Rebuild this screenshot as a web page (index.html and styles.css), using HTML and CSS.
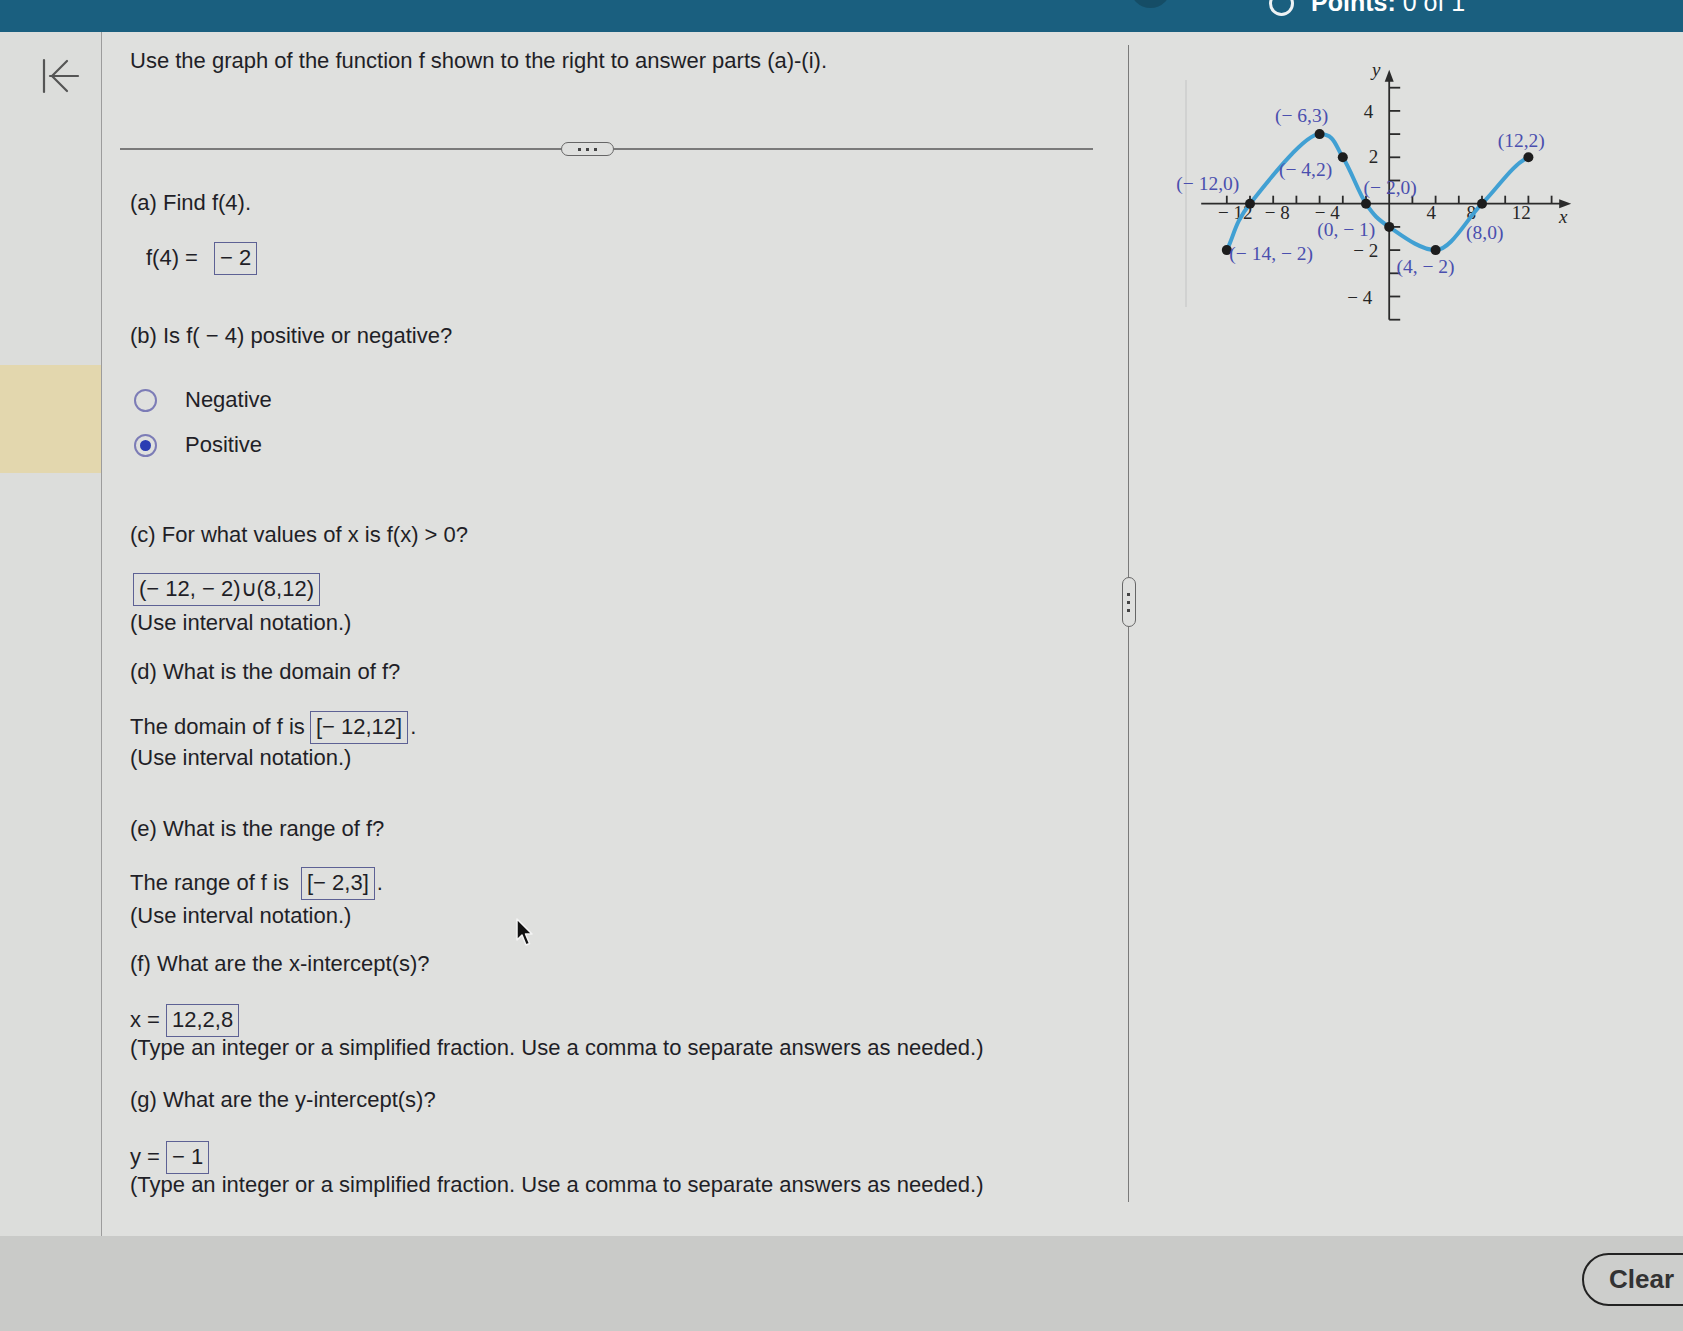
FILE: index.html
```html
<!DOCTYPE html>
<html lang="en">
<head>
<meta charset="utf-8">
<title>Function graph question</title>
<link rel="stylesheet" href="styles.css">
</head>
<body>
<header class="topbar">
  <div class="avatar"></div>
  <div class="status-ring"></div>
  <div class="points"><b>Points:</b> 0 of 1</div>
</header>

<div class="workspace">
  <aside class="sidebar">
    <svg class="back-icon" width="40" height="36" viewBox="0 0 40 36">
      <line x1="4" y1="2" x2="4" y2="34"/>
      <line x1="10" y1="18" x2="38" y2="18"/>
      <polyline points="27,3 12,18 27,33"/>
    </svg>
    <div class="highlight"></div>
  </aside>

  <main class="question">
    <p class="line title">Use the graph of the function f shown to the right to answer parts (a)-(i).</p>

    <div class="hdivider"><span class="hline-left"></span><span class="pill-h"><i></i><i></i><i></i></span><span class="hline-right"></span></div>

    <p class="line mt-32">(a) Find f(4).</p>
    <div class="line mt-25 indent">f(4) =<span class="answer ml-16">− 2</span></div>

    <p class="line mt-48">(b) Is f( − 4) positive or negative?</p>
    <div class="line option mt-34"><span class="radio"></span>Negative</div>
    <div class="line option mt-15"><span class="radio checked"></span>Positive</div>

    <p class="line mt-60">(c) For what values of x is f(x) &gt; 0?</p>
    <div class="line mt-24 nudge"><span class="answer">(− 12, − 2)∪(8,12)</span></div>
    <p class="note mt-6">(Use interval notation.)</p>

    <p class="line mt-21">(d) What is the domain of f?</p>
    <div class="line mt-25">The domain of f is<span class="answer ml-5">[− 12,12]</span><span class="ml-2">.</span></div>
    <p class="note mt-3">(Use interval notation.)</p>

    <p class="line mt-43">(e) What is the range of f?</p>
    <div class="line mt-24">The range of f is<span class="answer ml-12">[− 2,3]</span><span class="ml-2">.</span></div>
    <p class="note mt-5">(Use interval notation.)</p>

    <p class="line mt-20">(f) What are the x-intercept(s)?</p>
    <div class="line mt-26">x =<span class="answer ml-6">12,2,8</span></div>
    <p class="note">(Type an integer or a simplified fraction. Use a comma to separate answers as needed.)</p>

    <p class="line mt-24">(g) What are the y-intercept(s)?</p>
    <div class="line mt-27">y =<span class="answer ml-6">− 1</span></div>
    <p class="note">(Type an integer or a simplified fraction. Use a comma to separate answers as needed.)</p>
  </main>

  <div class="vdivider"><span class="vline-top"></span><span class="pill-v"><i></i><i></i><i></i></span><span class="vline-bottom"></span></div>

  <section class="graph-pane">
    <svg class="graph" width="420" height="290" viewBox="0 0 420 290">
      <line class="frame" x1="27" y1="30" x2="27" y2="257"/>
      <g transform="translate(230.2,153.7)">
        <g class="axis">
          <line x1="-188" y1="0" x2="174" y2="0"/>
          <line x1="0" y1="116" x2="0" y2="-126"/>
          <line x1="-162.4" y1="0" x2="-162.4" y2="-8"/>
          <line x1="-139.2" y1="0" x2="-139.2" y2="-8"/>
          <line x1="-116" y1="0" x2="-116" y2="-8"/>
          <line x1="-92.8" y1="0" x2="-92.8" y2="-8"/>
          <line x1="-69.6" y1="0" x2="-69.6" y2="-8"/>
          <line x1="-46.4" y1="0" x2="-46.4" y2="-8"/>
          <line x1="-23.2" y1="0" x2="-23.2" y2="-8"/>
          <line x1="23.2" y1="0" x2="23.2" y2="-8"/>
          <line x1="46.4" y1="0" x2="46.4" y2="-8"/>
          <line x1="69.6" y1="0" x2="69.6" y2="-8"/>
          <line x1="92.8" y1="0" x2="92.8" y2="-8"/>
          <line x1="116" y1="0" x2="116" y2="-8"/>
          <line x1="139.2" y1="0" x2="139.2" y2="-8"/>
          <line x1="162.4" y1="0" x2="162.4" y2="-8"/>
          <line x1="0" y1="-116" x2="11" y2="-116"/>
          <line x1="0" y1="-92.8" x2="11" y2="-92.8"/>
          <line x1="0" y1="-69.6" x2="11" y2="-69.6"/>
          <line x1="0" y1="-46.4" x2="11" y2="-46.4"/>
          <line x1="0" y1="-23.2" x2="11" y2="-23.2"/>
          <line x1="0" y1="23.2" x2="11" y2="23.2"/>
          <line x1="0" y1="46.4" x2="11" y2="46.4"/>
          <line x1="0" y1="69.6" x2="11" y2="69.6"/>
          <line x1="0" y1="92.8" x2="11" y2="92.8"/>
          <line x1="0" y1="116" x2="11" y2="116"/>
        </g>
        <polygon class="arrow" points="182,0 170,-4.5 170,4.5"/>
        <polygon class="arrow" points="0,-134 -4.5,-122 4.5,-122"/>

        <g class="num">
          <text x="-16" y="-86" text-anchor="end">4</text>
          <text x="-11" y="-41" text-anchor="end">2</text>
          <text x="-11" y="53" text-anchor="end">− 2</text>
          <text x="-17" y="100" text-anchor="end">− 4</text>
          <text class="var" x="-13" y="-128" text-anchor="middle">y</text>
          <text x="-154" y="15" text-anchor="middle">− 12</text>
          <text x="-112" y="15" text-anchor="middle">− 8</text>
          <text x="-62" y="15" text-anchor="middle">− 4</text>
          <text x="42" y="15" text-anchor="middle">4</text>
          <text x="82" y="15" text-anchor="middle">8</text>
          <text x="132" y="15" text-anchor="middle">12</text>
          <text class="var" x="174" y="19" text-anchor="middle">x</text>
        </g>

        <path class="curve" d="M-162.4,46.4 C-154.7,30.9 -154.7,19.3 -139.2,0 C-123.7,-19.3 -85.1,-69.6 -69.6,-69.6 C-54.1,-69.6 -54.1,-58 -46.4,-46.4 C-38.7,-34.8 -30.9,-11.6 -23.2,0 C-15.5,11.6 -11.6,15.5 0,23.2 C11.6,30.9 30.9,46.4 46.4,46.4 C61.9,46.4 77.3,15.5 92.8,0 C108.3,-15.5 123.7,-39.7 139.2,-46.4"/>

        <g class="dots">
          <circle cx="-162.4" cy="46.4" r="5"/>
          <circle cx="-139.2" cy="0" r="5"/>
          <circle cx="-69.6" cy="-69.6" r="5"/>
          <circle cx="-46.4" cy="-46.4" r="5"/>
          <circle cx="-23.2" cy="0" r="5"/>
          <circle cx="0" cy="23.2" r="5"/>
          <circle cx="46.4" cy="46.4" r="5"/>
          <circle cx="92.8" cy="0" r="5"/>
          <circle cx="139.2" cy="-46.4" r="5"/>
        </g>

        <g class="pt" text-anchor="middle">
          <text x="-87.7" y="-82">(− 6,3)</text>
          <text x="-83.7" y="-28">(− 4,2)</text>
          <text x="-181.4" y="-14">(− 12,0)</text>
          <text x="1" y="-10">(− 2,0)</text>
          <text x="-43" y="32">(0, − 1)</text>
          <text x="-118" y="56">(− 14, − 2)</text>
          <text x="36.3" y="69">(4, − 2)</text>
          <text x="95.6" y="35">(8,0)</text>
          <text x="132" y="-57">(12,2)</text>
        </g>
      </g>
    </svg>
  </section>
</div>

<footer class="footer">
  <button class="clear-btn" type="button">Clear</button>
</footer>

<svg class="cursor" width="22" height="32" viewBox="0 0 22 32">
  <path d="M3 2 L3 23 L8 18 L12 28 L15.5 26.5 L11.5 17 L18 17 Z"/>
</svg>
</body>
</html>
```

FILE: styles.css
```css
html, body {
  margin: 0;
  padding: 0;
}

body {
  width: 1683px;
  height: 1331px;
  overflow: hidden;
  position: relative;
  background: #dfe0de;
  font-family: "Liberation Sans", Arial, sans-serif;
  color: #1f1f27;
}

/* top bar */
.topbar {
  height: 32px;
  background: #1a5f7f;
  display: flex;
  align-items: flex-start;
  padding-left: 1130px;
  overflow: hidden;
}

.avatar {
  width: 41px;
  height: 41px;
  border-radius: 50%;
  background: #154d66;
  margin-top: -33px;
  flex-shrink: 0;
}

.status-ring {
  width: 19px;
  height: 19px;
  border: 3px solid #eef2f4;
  border-radius: 50%;
  margin: -9px 0 0 98px;
  flex-shrink: 0;
}

.points {
  color: #ffffff;
  font-size: 25px;
  line-height: 25px;
  margin: -10px 0 0 17px;
  white-space: nowrap;
}

/* workspace */
.workspace {
  display: flex;
  height: 1204px;
}

.sidebar {
  width: 101px;
  flex-shrink: 0;
  background: #dcdddb;
  border-right: 1px solid #9c9c9c;
}

.back-icon {
  display: block;
  margin: 26px 0 0 40px;
  fill: none;
  stroke: #555;
  stroke-width: 2.2;
  stroke-linecap: round;
  stroke-linejoin: round;
}

.highlight {
  margin-top: 271px;
  height: 108px;
  background: #e3d7ae;
}

.question {
  width: 1019px;
  flex-shrink: 0;
  box-sizing: border-box;
  padding: 14px 28px 0 28px;
}

.line {
  margin: 0;
  height: 30px;
  line-height: 30px;
  font-size: 22px;
  white-space: nowrap;
  display: flex;
  align-items: center;
}

.note {
  margin: 0;
  height: 26px;
  line-height: 26px;
  font-size: 22px;
  white-space: nowrap;
}

.indent { padding-left: 16px; }
.nudge { padding-left: 3px; }

.answer {
  display: inline-block;
  height: 33px;
  line-height: 30px;
  box-sizing: border-box;
  border: 1.5px solid #5d6194;
  padding: 0 5px;
}

.option { padding-left: 4px; }

.radio {
  width: 23px;
  height: 23px;
  box-sizing: border-box;
  border: 2px solid #7c7cb6;
  border-radius: 50%;
  margin-right: 28px;
  display: flex;
  align-items: center;
  justify-content: center;
  flex-shrink: 0;
}

.radio.checked::after {
  content: "";
  width: 11px;
  height: 11px;
  border-radius: 50%;
  background: #2b3db3;
}

/* horizontal divider */
.hdivider {
  margin: 66px 0 0 -10px;
  width: 973px;
  height: 14px;
  display: flex;
  align-items: center;
}

.hline-left {
  width: 441px;
  height: 1.5px;
  background: #7a7a7a;
}

.hline-right {
  flex: 1;
  height: 1.5px;
  background: #7a7a7a;
}

.pill-h {
  width: 51px;
  height: 12px;
  border: 1.5px solid #666;
  border-radius: 8px;
  display: flex;
  align-items: center;
  justify-content: center;
  gap: 5px;
}

.pill-h i, .pill-v i {
  display: block;
  width: 3px;
  height: 3px;
  background: #444;
}

/* vertical divider */
.vdivider {
  width: 15px;
  flex-shrink: 0;
  box-sizing: border-box;
  padding: 13px 0 34px;
  display: flex;
  flex-direction: column;
  align-items: center;
}

.vline-top {
  width: 1.5px;
  height: 532px;
  background: #7a7a7a;
}

.vline-bottom {
  width: 1.5px;
  flex: 1;
  background: #7a7a7a;
}

.pill-v {
  width: 12px;
  height: 48px;
  border: 1.5px solid #666;
  border-radius: 8px;
  display: flex;
  flex-direction: column;
  align-items: center;
  justify-content: center;
  gap: 5px;
}

/* graph */
.graph-pane {
  flex: 1;
  padding: 18px 0 0 23px;
}

.graph {
  display: block;
  font-family: "Liberation Serif", "Times New Roman", serif;
}

.graph .frame {
  stroke: #cdcecc;
  stroke-width: 1.5;
}

.graph .axis line {
  stroke: #2b2b2b;
  stroke-width: 1.8;
}

.graph .arrow { fill: #2b2b2b; }

.graph .num text {
  font-size: 19px;
  fill: #262626;
}

.graph .num .var { font-style: italic; }

.graph .curve {
  fill: none;
  stroke: #41a0d3;
  stroke-width: 4;
  stroke-linecap: round;
}

.graph .dots circle { fill: #1d1d1d; }

.graph .pt text {
  font-size: 19.5px;
  fill: #4a4fae;
}

/* footer */
.footer {
  height: 95px;
  background: #c9cac8;
  display: flex;
  justify-content: flex-end;
  align-items: flex-start;
}

.clear-btn {
  margin: 17px -40px 0 0;
  width: 141px;
  height: 53px;
  flex-shrink: 0;
  box-sizing: border-box;
  border: 2.5px solid #222;
  border-radius: 27px;
  background: #cdcecc;
  font-family: "Liberation Sans", Arial, sans-serif;
  font-weight: bold;
  font-size: 26px;
  color: #333;
  text-align: left;
  padding: 0 0 0 25px;
}

/* mouse cursor overlay */
.cursor {
  position: absolute;
  left: 514px;
  top: 917px;
}

.cursor path {
  fill: #111;
  stroke: #f4f4f4;
  stroke-width: 1.5;
  stroke-linejoin: round;
}

/* spacing helpers */
.mt-3 { margin-top: 3px; }
.mt-5 { margin-top: 5px; }
.mt-6 { margin-top: 6px; }
.mt-15 { margin-top: 15px; }
.mt-20 { margin-top: 20px; }
.mt-21 { margin-top: 21px; }
.mt-24 { margin-top: 24px; }
.mt-25 { margin-top: 25px; }
.mt-26 { margin-top: 26px; }
.mt-27 { margin-top: 27px; }
.mt-32 { margin-top: 32px; }
.mt-34 { margin-top: 34px; }
.mt-43 { margin-top: 43px; }
.mt-48 { margin-top: 48px; }
.mt-60 { margin-top: 60px; }
.ml-2 { margin-left: 2px; }
.ml-5 { margin-left: 5px; }
.ml-6 { margin-left: 6px; }
.ml-12 { margin-left: 12px; }
.ml-16 { margin-left: 16px; }
```
